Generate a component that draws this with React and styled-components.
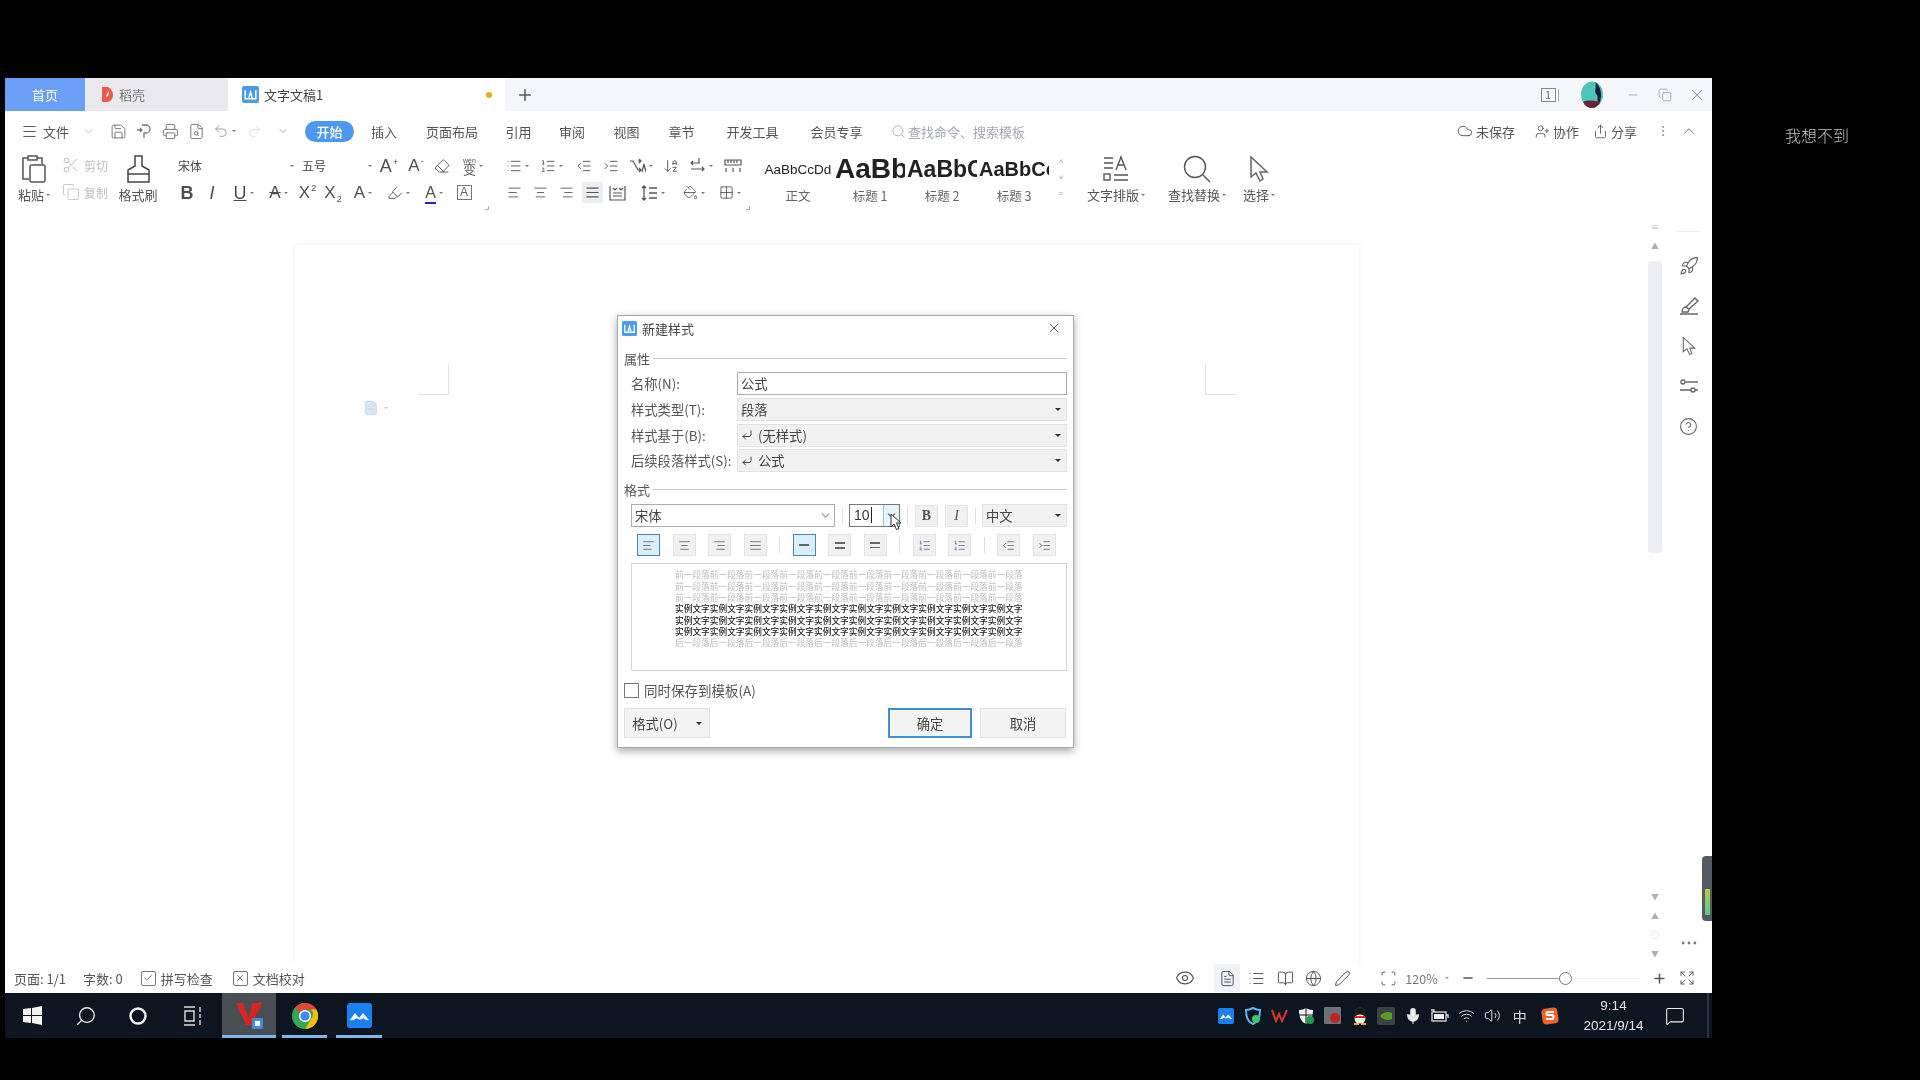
import React from "react";
import styled, { createGlobalStyle } from "styled-components";
import {
  Menu, ChevronDown, ChevronUp, Save, Printer, FileSearch, Undo2, Redo2, Plus, Minus, X, Copy,
  Scissors, List, ListOrdered, IndentDecrease, IndentIncrease, AlignLeft, AlignCenter,
  AlignRight, AlignJustify, Eraser, Highlighter, Search, Rocket, CircleHelp, Eye, FileText, BookOpen,
  Globe, Scan, Cloud, UserPlus, Share, EllipsisVertical, Ellipsis, Mic, Wifi, Volume2, MessageSquare,
  CornerDownLeft, Grid2x2, PaintBucket, ArrowDownAZ, Expand, Check, Pen,
} from "lucide-react";

const GlobalStyle = createGlobalStyle`
  html, body { margin: 0; padding: 0; background: #000; }
  body { font-family: "Noto Sans CJK SC", "Liberation Sans", sans-serif; color: #444; }
  * { box-sizing: border-box; }
`;

const Screen = styled.div`
  position: relative;
  width: 1920px;
  height: 1080px;
  background: #000;
  padding: 78px 0 0 5px;
  display: flex;
  overflow: hidden;
  filter: blur(0.35px);
`;

const Desktop = styled.div`
  width: 1707px;
  display: flex;
  flex-direction: column;
`;

const Caption = styled.div`
  margin: 45px 0 0 73px;
  font-size: 16px;
  color: #c4c4c4;
  font-weight: 300;
  white-space: nowrap;
`;

const Window = styled.div`
  position: relative;
  height: 915px;
  background: #fff;
  display: flex;
  flex-direction: column;
`;

/* tab strip */
const TabBar = styled.div`
  height: 33px;
  background: #f5f6fa;
  display: flex;
  align-items: center;
  flex: none;
`;

const Tab = styled.div`
  width: ${(p) => p.$w}px;
  height: 33px;
  display: flex;
  align-items: center;
  justify-content: ${(p) => (p.$center ? "center" : "flex-start")};
  gap: 5px;
  padding-left: ${(p) => p.$pad || 0}px;
  font-size: 13px;
  background: ${(p) => p.$bg};
  color: ${(p) => p.$color || "#555"};
`;

const Dot = styled.span`
  width: 6px;
  height: 6px;
  border-radius: 50%;
  background: #f2a71b;
  margin-left: auto;
  margin-right: 13px;
`;

const AddTab = styled.div`
  width: 40px;
  display: flex;
  justify-content: center;
  color: #555;
`;

const TabRight = styled.div`
  margin-left: auto;
  display: flex;
  align-items: center;
  height: 33px;
`;

const WinCell = styled.div`
  width: ${(p) => p.$w}px;
  display: flex;
  justify-content: center;
  align-items: center;
  color: ${(p) => p.$color || "#9a9a9a"};
`;

const NumBadge = styled.div`
  width: 15px;
  height: 14px;
  border: 1.5px solid #888;
  font-size: 10px;
  line-height: 11px;
  text-align: center;
  color: #666;
  box-shadow: 3px 0 0 -1px #fff, 4px 0 0 -1px #aaa;
`;

/* menu row */
const MenuRow = styled.div`
  height: 40px;
  display: flex;
  align-items: center;
  flex: none;
`;

const Cell = styled.div`
  flex: 0 0 ${(p) => p.$w}px;
  height: 100%;
  display: flex;
  align-items: center;
  justify-content: center;
  gap: 3px;
  font-size: ${(p) => p.$fs || 13}px;
  color: ${(p) => p.$color || "#555"};
  white-space: nowrap;
`;

const StartPill = styled.div`
  width: 49px;
  height: 21px;
  margin: 0 5px 0 8px;
  flex: none;
  border-radius: 11px;
  background: #4d98f0;
  color: #fff;
  font-size: 13px;
  font-weight: 500;
  line-height: 21px;
  text-align: center;
`;

const SearchHint = styled.div`
  display: flex;
  align-items: center;
  gap: 2px;
  font-size: 13px;
  color: #a4a8b2;
  margin-left: 11px;
  width: 140px;
  flex: none;
`;

const MenuRight = styled.div`
  margin-left: auto;
  display: flex;
  align-items: center;
  height: 100%;
  padding-right: 9px;
`;

const Action = styled.div`
  display: flex;
  align-items: center;
  gap: 3px;
  font-size: 13px;
  color: #555;
  margin-right: ${(p) => p.$mr || 0}px;
`;

/* ribbon */
const Ribbon = styled.div`
  height: 61px;
  display: flex;
  flex: none;
  padding-left: 7px;
`;

const BigTool = styled.div`
  flex: 0 0 ${(p) => p.$w}px;
  display: flex;
  flex-direction: column;
  align-items: center;
  font-size: 13px;
  color: #555;
  padding-top: 1px;
  white-space: nowrap;
`;

const BigIcon = styled.div`
  height: 33px;
  display: flex;
  align-items: center;
  justify-content: center;
`;

const BigLabel = styled.div`
  height: 20px;
  line-height: 20px;
  display: flex;
  align-items: center;
  gap: 2px;
`;

const SmallColumn = styled.div`
  flex: 0 0 58px;
  display: flex;
  flex-direction: column;
  padding-left: 6px;
`;

const SmallTool = styled.div`
  height: 27px;
  display: flex;
  align-items: center;
  gap: 4px;
  font-size: 12px;
  color: #bdbdbd;
  padding-top: 1px;
`;

const RibbonGroup = styled.div`
  position: relative;
  flex: 0 0 ${(p) => p.$w}px;
  padding-left: ${(p) => p.$pad || 0}px;
  padding-top: 1px;
  display: flex;
  flex-direction: column;
`;

const RibbonRow = styled.div`
  height: 27px;
  display: flex;
  align-items: center;
`;

const Launcher = styled.span`
  position: absolute;
  right: ${(p) => p.$r}px;
  bottom: 2px;
  width: 4px;
  height: 4px;
  border-right: 1px solid #aaa;
  border-bottom: 1px solid #aaa;
`;

const FontName = styled.div`
  flex: 0 0 ${(p) => p.$w}px;
  display: flex;
  align-items: center;
  justify-content: space-between;
  font-size: 12px;
  color: #444;
  padding-right: 3px;
  padding-left: ${(p) => p.$pad}px;
`;

const Caret = styled.span`
  flex: none;
  width: 0;
  height: 0;
  border-left: 2px solid transparent;
  border-right: 2px solid transparent;
  border-top: 2.5px solid ${(p) => p.$color || "#777"};
  margin-left: ${(p) => p.$ml || 0}px;
`;

const Letter = styled.span`
  font-family: "Liberation Sans", sans-serif;
  font-size: ${(p) => p.$fs || 17}px;
  font-weight: ${(p) => (p.$bold ? 700 : 400)};
  font-style: ${(p) => (p.$italic ? "italic" : "normal")};
  text-decoration: ${(p) => p.$deco || "none"};
  line-height: 1;
  color: #4e4e4e;
  position: relative;
`;

const Mark = styled.sup`
  font-size: 9px;
  line-height: 0;
  margin-left: 1px;
`;

const Sub = styled.sub`
  font-size: 9px;
  line-height: 0;
  margin-left: 1px;
`;

const ColorBar = styled.span`
  position: absolute;
  left: 0;
  right: 0;
  bottom: -3px;
  height: 2px;
  background: ${(p) => p.$color};
`;

const BoxedA = styled.span`
  width: 15px;
  height: 15px;
  border: 1px solid #777;
  font-family: "Liberation Sans", sans-serif;
  font-size: 12px;
  line-height: 13px;
  text-align: center;
  color: #666;
`;

const WenTool = styled.span`
  display: flex;
  flex-direction: column;
  align-items: center;
  line-height: 1;
`;

const WenTop = styled.span`
  font-size: 7px;
  font-family: "Liberation Sans", sans-serif;
  color: #555;
`;

const WenChar = styled.span`
  font-size: 13px;
  margin-top: -2px;
  color: #555;
`;

const Active = styled.span`
  display: flex;
  padding: 3px;
  background: #eceef1;
`;

const Gallery = styled.div`
  flex: 0 0 288px;
  display: flex;
`;

const StyleCard = styled.div`
  flex: 0 0 72px;
  display: flex;
  flex-direction: column;
  align-items: center;
  overflow: hidden;
`;

const StyleSample = styled.div`
  height: 36px;
  width: 70px;
  overflow: hidden;
  display: flex;
  align-items: center;
  justify-content: ${(p) => (p.$left ? "flex-start" : "center")};
  font-family: "Liberation Sans", sans-serif;
  font-size: ${(p) => p.$fs}px;
  font-weight: ${(p) => (p.$bold ? 700 : 400)};
  color: #222;
  white-space: nowrap;
`;

const StyleLabel = styled.div`
  font-size: 12.5px;
  color: #666;
  line-height: 20px;
  margin-top: -1px;
`;

const GalleryArrows = styled.div`
  flex: 0 0 22px;
  margin-right: 9px;
  display: flex;
  flex-direction: column;
  align-items: center;
  justify-content: space-around;
  height: 50px;
  padding-top: 2px;
  color: #999;
  font-size: 8px;
  line-height: 1;
`;

/* work area */
const Workspace = styled.div`
  flex: 1;
  display: flex;
  min-height: 0;
`;

const PageArea = styled.div`
  flex: 0 0 1640px;
  padding: 33px 0 0 290px;
  overflow: hidden;
`;

const Sheet = styled.div`
  width: 1064px;
  height: 800px;
  padding-top: 119px;
  background: #fff;
  box-shadow: 0 0 5px rgba(120, 120, 130, 0.13);
`;

const MarkRow = styled.div`
  display: flex;
  justify-content: space-between;
  padding: 0 123px;
`;

const CropMark = styled.div`
  width: 31px;
  height: 31px;
  border-bottom: 1px solid #e2e2e2;
  border-${(p) => (p.$right ? "left" : "right")}: 1px solid #e2e2e2;
`;

const FileHint = styled.div`
  display: flex;
  align-items: center;
  gap: 5px;
  margin: 5px 0 0 68px;
  color: #d3dcea;
`;

const ScrollColumn = styled.div`
  flex: 0 0 20px;
  display: flex;
  flex-direction: column;
  align-items: center;
  padding-top: 6px;
  color: #b5b5b5;
  font-size: 8px;
`;

const ScrollArrow = styled.div`
  height: ${(p) => p.$h || 19}px;
  line-height: 1;
  display: flex;
  justify-content: center;
  align-items: center;
  color: #b0b0b0;
`;

const Thumb = styled.div`
  width: 14px;
  height: 296px;
  margin-top: 5px;
  margin-bottom: 335px;
  border-radius: 3px;
  background: #eceef4;
`;

const SideColumn = styled.div`
  flex: 0 0 47px;
  display: flex;
  flex-direction: column;
  align-items: center;
  padding-top: 19px;
  position: relative;
  color: #666;
`;

const SideRule = styled.div`
  width: 24px;
  height: 1px;
  background: #ececec;
  margin-bottom: 14px;
`;

const SideIcon = styled.div`
  height: 40px;
  display: flex;
  align-items: center;
  justify-content: center;
`;

const SideMore = styled.div`
  margin-top: 487px;
  color: #777;
`;

const Meter = styled.div`
  position: absolute;
  right: 0;
  top: 644px;
  width: 10px;
  height: 65px;
  border-radius: 4px 0 0 4px;
  background: #555963;
  display: flex;
  align-items: flex-end;
  justify-content: center;
  padding-bottom: 6px;
`;

const MeterFill = styled.div`
  width: 5px;
  height: 26px;
  background: linear-gradient(#b9cb4c, #58c888);
`;

/* status */
const StatusBar = styled.div`
  height: 30px;
  flex: none;
  display: flex;
  align-items: center;
  padding-left: 9px;
  font-size: 13px;
  color: #555;
`;

const StatusText = styled.div`
  display: flex;
  align-items: center;
  gap: 5px;
  margin-right: ${(p) => p.$mr}px;
  white-space: nowrap;
`;

const CheckBox = styled.span`
  width: 15px;
  height: 15px;
  border: 1px solid #777;
  border-radius: 2px;
  display: flex;
  align-items: center;
  justify-content: center;
  font-size: 9px;
  line-height: 1;
  color: #555;
`;

const StatusRight = styled.div`
  margin-left: auto;
  display: flex;
  align-items: center;
  height: 100%;
  padding-right: 11px;
`;

const ViewActive = styled.div`
  width: 26px;
  height: 28px;
  background: #f1f2f5;
  display: flex;
  align-items: center;
  justify-content: center;
`;

const Slider = styled.div`
  flex: 0 0 153px;
  margin: 0 5px;
  height: 1px;
  position: relative;
  background: linear-gradient(to right, #999 51%, #eee 51%);
`;

const SliderKnob = styled.span`
  position: absolute;
  left: 72px;
  top: -6px;
  width: 13px;
  height: 13px;
  border-radius: 50%;
  border: 1.5px solid #777;
  background: #fff;
`;

/* taskbar */
const Taskbar = styled.div`
  height: 45px;
  flex: none;
  background: #0d1520;
  display: flex;
  align-items: center;
  color: #e6e6e6;
`;

const TaskItem = styled.div`
  flex: 0 0 ${(p) => p.$w}px;
  margin-right: ${(p) => p.$mr || 0}px;
  height: 100%;
  display: flex;
  align-items: center;
  justify-content: center;
  background: ${(p) => (p.$active ? "#494d54" : "transparent")};
  border-bottom: ${(p) => (p.$open ? "3px solid #7eb6e8" : "none")};
  padding-top: ${(p) => (p.$open ? "3px" : 0)};
`;

const TaskRight = styled.div`
  margin-left: auto;
  display: flex;
  align-items: center;
  height: 100%;
`;

const TrayIcon = styled.div`
  flex: 0 0 ${(p) => p.$w || 26.7}px;
  display: flex;
  justify-content: center;
  align-items: center;
  font-size: 14px;
  color: #ddd;
`;

const Clock = styled.div`
  flex: 0 0 93px;
  text-align: center;
  font-size: 13.5px;
  line-height: 20px;
  color: #e4e4e4;
  font-family: "Liberation Sans", sans-serif;
`;

const TaskEdge = styled.div`
  width: 2px;
  height: 100%;
  margin: 0 3px 0 17px;
  background: #2a3240;
`;

/* dialog */
const Dialog = styled.div`
  position: absolute;
  left: 612px;
  top: 237px;
  width: 457px;
  height: 433px;
  background: #fff;
  border: 1px solid #a9a9a9;
  box-shadow: 0 3px 8px rgba(0, 0, 0, 0.35);
  padding: 0 6px 0 6px;
`;

const DialogTitle = styled.div`
  height: 26px;
  margin-left: -2px;
  padding-bottom: 2px;
  display: flex;
  align-items: center;
  gap: 5px;
  font-size: 13px;
  color: #444;
`;

const CloseBtn = styled.div`
  margin-left: auto;
  margin-right: 5px;
  display: flex;
  color: #555;
`;

const SectionTitle = styled.div`
  height: 20px;
  margin-top: ${(p) => p.$mt}px;
  display: flex;
  align-items: center;
  gap: 3px;
  font-size: 13px;
  color: #555;

  &::after {
    content: "";
    flex: 1;
    height: 1px;
    background: #c9c9c9;
  }
`;

const FormRows = styled.div`
  display: flex;
  flex-direction: column;
  gap: 2.8px;
  padding-left: 7px;
  margin-top: 4px;
`;

const FormRow = styled.div`
  display: flex;
  align-items: center;
  height: 23px;
`;

const FormLabel = styled.div`
  flex: 0 0 106px;
  font-size: 13.3px;
  color: #555;
  white-space: nowrap;
`;

const Field = styled.div`
  flex: 1;
  width: ${(p) => (p.$w ? `${p.$w}px` : "auto")};
  flex-basis: ${(p) => (p.$w ? `${p.$w}px` : "0")};
  flex-grow: ${(p) => (p.$w ? 0 : 1)};
  height: 100%;
  display: flex;
  align-items: center;
  gap: 5px;
  padding: 0 5px 0 3px;
  font-size: 13.3px;
  color: #444;
  background: ${(p) => (p.$plain ? "#fff" : "#f1f1f1")};
  border: 1px solid ${(p) => (p.$plain ? "#a6adb5" : "#e1e1e1")};
`;

const FieldCaret = styled(Caret)`
  margin-left: ${(p) => (p.$inline ? 0 : "auto")};
  border-left-width: 3px;
  border-right-width: 3px;
  border-top-width: 3px;
`;

const FieldChevron = styled(ChevronDown)`
  margin-left: auto;
  margin-right: -3px;
  color: #999;
`;

const FormatRow = styled.div`
  display: flex;
  align-items: center;
  height: 23px;
  margin: 5px 0 0 7px;
`;

const SizeField = styled.div`
  flex: 0 0 51px;
  height: 100%;
  display: flex;
  border: 1px solid #777;
  font-size: 14px;
`;

const SizeValue = styled.div`
  flex: 1;
  padding-left: 4px;
  line-height: 21px;
  font-family: "Liberation Sans", sans-serif;
  color: #333;
`;

const SizeCaret = styled.span`
  border-right: 1px solid #222;
  padding-right: 1px;
`;

const SizeDrop = styled.div`
  flex: 0 0 16px;
  background: #e6f5fb;
  border-left: 1px solid #8dc6dc;
  display: flex;
  align-items: center;
  justify-content: center;
  color: #555;
`;

const Separator = styled.div`
  flex: 0 0 ${(p) => p.$w}px;
  display: flex;
  justify-content: center;

  &::after {
    content: "";
    width: 1px;
    height: 16px;
    background: #ddd;
  }
`;

const SquareBtn = styled.div`
  flex: 0 0 ${(p) => p.$w || 23}px;
  height: ${(p) => p.$h || 22}px;
  margin-left: ${(p) => p.$ml || 0}px;
  display: flex;
  align-items: center;
  justify-content: center;
  font-family: "Liberation Serif", serif;
  font-size: 14px;
  font-weight: ${(p) => (p.$bold ? 700 : 400)};
  font-style: ${(p) => (p.$italic ? "italic" : "normal")};
  color: #555;
  background: ${(p) => (p.$on ? "#d9f0fb" : "#f1f1f1")};
  border: 1px solid ${(p) => (p.$on ? "#4b87a5" : "#e3e3e3")};
`;

const AlignRow = styled.div`
  display: flex;
  align-items: center;
  gap: 12.5px;
  margin: 7px 0 0 13px;
`;

const RowSep = styled.div`
  width: 1px;
  height: 16px;
  background: #ddd;
  flex: none;
`;

const Line = styled.span`
  display: block;
  width: 10px;
  height: ${(p) => (p.$thick ? 2 : 1.5)}px;
  background: #666;
  margin: 1.5px 0;
`;

const LineStack = styled.div`
  display: flex;
  flex-direction: column;
  align-items: center;
  justify-content: center;
  height: 12px;
`;

const Preview = styled.div`
  margin: 7px 0 0 7px;
  height: 108px;
  border: 1px solid #d4d4d4;
  padding: 5px 0 0 43px;
  overflow: hidden;
`;

const PreviewLine = styled.div`
  font-size: 8.7px;
  line-height: 11.3px;
  height: 11.3px;
  white-space: nowrap;
  color: ${(p) => (p.$dark ? "#222" : "#bbb")};
  font-weight: ${(p) => (p.$dark ? 500 : 400)};
`;

const CheckRow = styled.div`
  height: 20px;
  margin-top: 9px;
  display: flex;
  align-items: center;
  gap: 5px;
  font-size: 13.5px;
  color: #555;
`;

const EmptyCheck = styled.span`
  width: 15px;
  height: 15px;
  border: 1px solid #777;
  background: #fff;
`;

const ButtonRow = styled.div`
  display: flex;
  gap: 8px;
  margin: 8px 1px 0 0;
`;

const DialogButton = styled.div`
  flex: 0 0 ${(p) => p.$w}px;
  height: 30px;
  margin-left: ${(p) => (p.$push ? "auto" : 0)};
  display: flex;
  align-items: center;
  justify-content: center;
  gap: 18px;
  font-size: 13.3px;
  color: #444;
  background: #f3f3f3;
  border: ${(p) => (p.$primary ? "2px solid #3f8fd2" : "1px solid #e0e0e0")};
`;

const Pointer = styled.svg`
  position: absolute;
  left: 272px;
  top: 197px;
`;

const ic = { strokeWidth: 1.4 };

const WpsLogo = ({ size = 15 }) => (
  <svg width={size} height={size} viewBox="0 0 16 16">
    <rect width="16" height="16" rx="2" fill="#4a9bea" />
    <path d="M3 4v8h10V4M6.5 11l1.5-5 1.5 5" fill="none" stroke="#fff" strokeWidth="1.4" />
  </svg>
);

const ShellLogo = () => (
  <svg width="13" height="17" viewBox="0 0 13 17">
    <path d="M1 1h6c4 2 5 6 5 8 0 4-3 7-6 7H1z" fill="#ee5a46" />
    <path d="M7 4c1 3-2 4-2 7 2 0 4-3 2-7z" fill="#fff" />
  </svg>
);

const Avatar = () => (
  <svg width="24" height="27" viewBox="0 0 24 27">
    <ellipse cx="12" cy="13.5" rx="11" ry="13" fill="#4fc4b8" />
    <path d="M15 1c6 4 8 14 4 22-3-4 0-8-3-10-2-3 1-8-1-12z" fill="#13243a" />
    <path d="M3 21c5-2 13-2 17 1-2 3-5 5-8 5-4 0-7-2-9-6z" fill="#6b2138" />
  </svg>
);

const SaveAs = () => (
  <svg width="17" height="17" viewBox="0 0 17 17" fill="none" stroke="#777" strokeWidth="1.3">
    <path d="M6 2h4a4 4 0 0 1 0 8H8v5M1 7h5M4 5l2 2-2 2" />
  </svg>
);

const Paste = () => (
  <svg width="28" height="30" viewBox="0 0 28 30" fill="none" stroke="#555" strokeWidth="1.5">
    <path d="M8 4H3v21h6" />
    <path d="M17 4h5v6" />
    <rect x="8" y="2" width="9" height="4" />
    <rect x="10" y="11" width="15" height="17" rx="1.5" />
  </svg>
);

const Brush = () => (
  <svg width="25" height="30" viewBox="0 0 25 30" fill="none" stroke="#444" strokeWidth="1.5">
    <path d="M9 2h7v10l7 4v12H2V16l7-4z" />
    <path d="M2 20h21" />
  </svg>
);

const Ruler = () => (
  <svg width="18" height="14" viewBox="0 0 18 14" fill="none" stroke="#555" strokeWidth="1.2">
    <path d="M1 1h16v5H1zM4 1v3M7 1v3M10 1v3M13 1v3M2 9v4M9 9v4M16 9v4" />
  </svg>
);

const ReturnArrows = () => (
  <svg width="17" height="17" viewBox="0 0 17 17" fill="none" stroke="#555" strokeWidth="1.2">
    <path d="M10 1v5H2M4 4L2 6l2 2M2 12h13M13 10l2 2-2 2" />
  </svg>
);

const Distribute = () => (
  <svg width="17" height="16" viewBox="0 0 17 16" fill="none" stroke="#555" strokeWidth="1.2">
    <path d="M1 1v14h15V1M4 3l2 2 2-2M10 3l2 2 2-2M4 8h9M4 11h9" />
  </svg>
);

const LineSpacing = () => (
  <svg width="17" height="16" viewBox="0 0 17 16" fill="none" stroke="#555" strokeWidth="1.3">
    <path d="M3 1v14M1 3l2-2 2 2M1 13l2 2 2-2M8 3h8M8 8h8M8 13h8" />
  </svg>
);

const CrossArrows = () => (
  <svg width="17" height="16" viewBox="0 0 17 16" fill="none" stroke="#555" strokeWidth="1.2">
    <path d="M1 3h3l5 9h3M9 3h3M10 1l2 2-2 2M10 10l2 2-2 2M13 14l2-8 2 8" />
  </svg>
);

const TypeSet = () => (
  <svg width="28" height="28" viewBox="0 0 28 28" fill="none" stroke="#555" strokeWidth="1.4">
    <path d="M2 3h9M2 8h9M2 13h9M14 15l5-13 5 13M16 10h6" />
    <rect x="2" y="19" width="6" height="6" />
    <path d="M12 20h14M12 25h14" />
  </svg>
);

const MagnifyBig = () => (
  <svg width="30" height="30" viewBox="0 0 30 30" fill="none" stroke="#555" strokeWidth="1.4">
    <circle cx="13" cy="13" r="10.5" />
    <path d="M21 21l7 7" />
  </svg>
);

const Arrow = ({ w = 22, h = 28 }) => (
  <svg width={w} height={h} viewBox="0 0 22 28" fill="none" stroke="#666" strokeWidth="1.5">
    <path d="M3 2v20l5-4 4 8 3-2-3-7h7z" />
  </svg>
);

const SideBrush = () => (
  <svg width="20" height="20" viewBox="0 0 20 20" fill="none" stroke="#666" strokeWidth="1.4">
    <path d="M7 11l9-9 3 3-9 8zM7 11c-3 0-4 3-4 5h6c1-1 1-2 1-3M1 18h18" />
  </svg>
);

const SideTune = () => (
  <svg width="20" height="16" viewBox="0 0 20 16" fill="none" stroke="#666" strokeWidth="1.4">
    <circle cx="4" cy="4" r="2" />
    <path d="M7 4h12M1 12h11M16 12h3" />
    <circle cx="14" cy="12" r="2" />
  </svg>
);

const WindowsLogo = () => (
  <svg width="19" height="19" viewBox="0 0 19 19" fill="#f4f4f4">
    <path d="M0 3l8-1v7H0zM9 2l10-2v9H9zM0 10h8v7l-8-1zM9 10h10v9L9 17z" />
  </svg>
);

const TaskView = () => (
  <svg width="20" height="20" viewBox="0 0 20 20" fill="none" stroke="#ddd" strokeWidth="1.4">
    <path d="M1 1h11M1 19h11M2 5h9v10H2zM17 1v5M17 8v4M17 14v5" />
  </svg>
);

const RedW = () => (
  <svg width="29" height="29" viewBox="0 0 29 29">
    <path d="M1 2h7l6 15 3-15h8l-7 22h-7z" fill="#d8261f" />
    <path d="M24 1l3 0-4 12z" fill="#d8261f" />
    <rect x="17" y="17" width="11" height="11" rx="1" fill="#3f8de0" />
    <rect x="20" y="20" width="5" height="5" fill="#fff" />
  </svg>
);

const ChromeIcon = () => (
  <svg width="26" height="26" viewBox="0 0 26 26">
    <circle cx="13" cy="13" r="13" fill="#35a853" />
    <path d="M13 0a13 13 0 0 1 11.3 6.5H13A6.5 6.5 0 0 0 7 10L3.5 4.5A13 13 0 0 1 13 0z" fill="#ea4335" />
    <path d="M24.3 6.5A13 13 0 0 1 13 26l6-10a6.5 6.5 0 0 0 0-9.5z" fill="#fbbc05" />
    <circle cx="13" cy="13" r="6" fill="#fff" />
    <circle cx="13" cy="13" r="4.6" fill="#4285f4" />
  </svg>
);

const PeakIcon = ({ size = 25 }) => (
  <svg width={size} height={size} viewBox="0 0 25 25">
    <rect width="25" height="25" rx="3" fill="#1a7ff0" />
    <path d="M3 17l5-7 4 5 4-5 6 7c-3 1-4-1-6-2-2 2-4 2-6 0-2 1-4 3-7 2z" fill="#fff" />
  </svg>
);

const ShieldBlue = () => (
  <svg width="18" height="18" viewBox="0 0 18 18">
    <path d="M2 3c3 0 5-1 7-2 2 1 4 2 7 2 0 7-2 12-7 14C4 15 2 10 2 3z" fill="none" stroke="#5db8ef" strokeWidth="2" />
    <circle cx="12" cy="12" r="4" fill="#42c46d" />
  </svg>
);

const ShieldWhite = () => (
  <svg width="18" height="18" viewBox="0 0 18 18">
    <path d="M2 3c3 0 5-1 7-2 2 1 4 2 7 2 0 7-2 12-7 14C4 15 2 10 2 3z" fill="#f2f2f2" />
    <path d="M9 1v16M2 8h14" stroke="#0d1520" strokeWidth="1" />
    <circle cx="13" cy="13" r="4" fill="#1d9a4f" />
  </svg>
);

const TrayW = () => (
  <svg width="17" height="14" viewBox="0 0 17 14" fill="none" stroke="#c6362b" strokeWidth="2.2">
    <path d="M1 1l4 11 3-7 3 7 5-11" />
  </svg>
);

const RedSeal = () => (
  <svg width="17" height="17" viewBox="0 0 17 17">
    <rect width="17" height="17" rx="1" fill="#6d7076" />
    <circle cx="11" cy="11" r="5" fill="#c4201f" />
  </svg>
);

const Penguin = () => (
  <svg width="14" height="18" viewBox="0 0 14 18">
    <ellipse cx="7" cy="6" rx="4.5" ry="5.5" fill="#171717" stroke="#444" strokeWidth="0.5" />
    <ellipse cx="7" cy="12" rx="5.5" ry="4.5" fill="#f4f4f4" />
    <path d="M2 9h10v2H2z" fill="#d92a24" />
    <path d="M1 16h5v2H1zM8 16h5v2H8z" fill="#e9b11d" />
  </svg>
);

const GpuIcon = () => (
  <svg width="18" height="18" viewBox="0 0 18 18">
    <rect width="18" height="18" rx="2" fill="#3c4146" />
    <path d="M3 9c3-4 8-5 12-3v6c-4 2-9 1-12-3z" fill="#5d9b25" />
  </svg>
);

const BatteryPlug = () => (
  <svg width="19" height="13" viewBox="0 0 19 13" fill="none" stroke="#ddd" strokeWidth="1.3">
    <rect x="2" y="3" width="14" height="9" />
    <rect x="4" y="5" width="10" height="5" fill="#eee" stroke="none" />
    <path d="M1 1h3v2M16 6h2v3" />
  </svg>
);

const Sogou = () => (
  <svg width="18" height="18" viewBox="0 0 18 18">
    <rect x="1" y="1" width="16" height="16" rx="4" fill="#f0622a" transform="rotate(-8 9 9)" />
    <path d="M13 5H7c-2 0-2 3 0 3h4c2 0 2 4 0 4H5" fill="none" stroke="#fff" strokeWidth="2" />
  </svg>
);

const CursorGlyph = () => (
  <Pointer width="14" height="18" viewBox="0 0 14 18">
    <path d="M1 1v13l3-3 2.5 5.5 2.5-1L6.5 10H11z" fill="#fff" stroke="#333" strokeWidth="1" />
  </Pointer>
);

const BEFORE = "前一段落".repeat(10);
const SAMPLE = "实例文字".repeat(10);
const AFTER = "后一段落".repeat(10);

export default function App() {
  return (
    <>
      <GlobalStyle />
      <Screen>
        <Desktop>
          <Window>
            <TabBar>
              <Tab $w={80} $center $bg="#6b9ff6" $color="#fff">首页</Tab>
              <Tab $w={143} $pad={16} $bg="#e9e9ee" $color="#777"><ShellLogo />稻壳</Tab>
              <Tab $w={277} $pad={14} $bg="#fff" $color="#444"><WpsLogo size={17} />文字文稿1<Dot /></Tab>
              <AddTab><Plus size={18} strokeWidth={2} /></AddTab>
              <TabRight>
                <WinCell $w={36}><NumBadge>1</NumBadge></WinCell>
                <WinCell $w={52}><Avatar /></WinCell>
                <WinCell $w={30}><Minus size={14} {...ic} /></WinCell>
                <WinCell $w={34}><Copy size={14} {...ic} /></WinCell>
                <WinCell $w={30}><X size={18} {...ic} /></WinCell>
              </TabRight>
            </TabBar>

            <MenuRow>
              <Cell $w={13} />
              <Cell $w={22}><Menu size={17} {...ic} /></Cell>
              <Cell $w={32}>文件</Cell>
              <Cell $w={33}><ChevronDown size={13} color="#aaa" {...ic} /></Cell>
              <Cell $w={26}><Save size={17} color="#777" {...ic} /></Cell>
              <Cell $w={26}><SaveAs /></Cell>
              <Cell $w={26}><Printer size={17} color="#777" {...ic} /></Cell>
              <Cell $w={26}><FileSearch size={17} color="#777" {...ic} /></Cell>
              <Cell $w={30}><Undo2 size={16} color="#999" {...ic} /><Caret /></Cell>
              <Cell $w={30}><Redo2 size={15} color="#ddd" {...ic} /></Cell>
              <Cell $w={28}><ChevronDown size={12} color="#888" {...ic} /></Cell>
              <StartPill>开始</StartPill>
              <Cell $w={50}>插入</Cell>
              <Cell $w={86}>页面布局</Cell>
              <Cell $w={47}>引用</Cell>
              <Cell $w={60}>审阅</Cell>
              <Cell $w={49}>视图</Cell>
              <Cell $w={61}>章节</Cell>
              <Cell $w={81}>开发工具</Cell>
              <Cell $w={87}>会员专享</Cell>
              <SearchHint><Search size={15} color="#aaa" {...ic} />查找命令、搜索模板</SearchHint>
              <MenuRight>
                <Action $mr={20}><Cloud size={16} {...ic} />未保存</Action>
                <Action $mr={14}><UserPlus size={15} {...ic} />协作</Action>
                <Action $mr={14}><Share size={15} {...ic} />分享</Action>
                <Cell $w={24}><EllipsisVertical size={14} color="#888" {...ic} /></Cell>
                <Cell $w={28}><ChevronUp size={18} color="#888" {...ic} /></Cell>
              </MenuRight>
            </MenuRow>

            <Ribbon>
              <BigTool $w={44}>
                <BigIcon><Paste /></BigIcon>
                <BigLabel>粘贴<Caret /></BigLabel>
              </BigTool>
              <SmallColumn>
                <SmallTool><Scissors size={18} color="#c9c9c9" {...ic} />剪切</SmallTool>
                <SmallTool><Copy size={18} color="#c9c9c9" {...ic} />复制</SmallTool>
              </SmallColumn>
              <BigTool $w={48}>
                <BigIcon><Brush /></BigIcon>
                <BigLabel>格式刷</BigLabel>
              </BigTool>

              <RibbonGroup $w={339} $pad={13}>
                <RibbonRow>
                  <FontName $w={122} $pad={3}>宋体<Caret /></FontName>
                  <FontName $w={78} $pad={5}>五号<Caret /></FontName>
                  <Cell $w={28}><Letter $fs={18}>A<Mark>+</Mark></Letter></Cell>
                  <Cell $w={26}><Letter $fs={17}>A<Mark>-</Mark></Letter></Cell>
                  <Cell $w={26}><Eraser size={16} {...ic} /></Cell>
                  <Cell $w={36}><WenTool><WenTop>wén</WenTop><WenChar>变</WenChar></WenTool><Caret /></Cell>
                </RibbonRow>
                <RibbonRow>
                  <Cell $w={24}><Letter $fs={18} $bold>B</Letter></Cell>
                  <Cell $w={26}><Letter $fs={18} $italic>I</Letter></Cell>
                  <Cell $w={37}><Letter $fs={18} $deco="underline">U</Letter><Caret /></Cell>
                  <Cell $w={33}><Letter $fs={17} $deco="line-through">A</Letter><Caret /></Cell>
                  <Cell $w={25}><Letter>X<Mark>2</Mark></Letter></Cell>
                  <Cell $w={26}><Letter>X<Sub>2</Sub></Letter></Cell>
                  <Cell $w={34}><Letter $fs={17}>A</Letter><Caret /></Cell>
                  <Cell $w={36}><Highlighter size={16} {...ic} /><Caret /></Cell>
                  <Cell $w={36}><Letter $fs={16}>A<ColorBar $color="#2222bb" /></Letter><Caret /></Cell>
                  <Cell $w={24}><BoxedA>A</BoxedA></Cell>
                </RibbonRow>
                <Launcher $r={12} />
              </RibbonGroup>

              <RibbonGroup $w={261}>
                <RibbonRow>
                  <Cell $w={33}><List size={16} {...ic} /><Caret /></Cell>
                  <Cell $w={35}><ListOrdered size={16} {...ic} /><Caret /></Cell>
                  <Cell $w={29}><IndentDecrease size={16} {...ic} /></Cell>
                  <Cell $w={26}><IndentIncrease size={16} {...ic} /></Cell>
                  <Cell $w={34}><CrossArrows /><Caret /></Cell>
                  <Cell $w={26}><ArrowDownAZ size={16} {...ic} /></Cell>
                  <Cell $w={34}><ReturnArrows /><Caret /></Cell>
                  <Cell $w={29}><Ruler /></Cell>
                </RibbonRow>
                <RibbonRow>
                  <Cell $w={26}><AlignLeft size={15} {...ic} /></Cell>
                  <Cell $w={26}><AlignCenter size={15} {...ic} /></Cell>
                  <Cell $w={26}><AlignRight size={15} {...ic} /></Cell>
                  <Cell $w={26}><Active><AlignJustify size={15} strokeWidth={1.8} /></Active></Cell>
                  <Cell $w={25}><Distribute /></Cell>
                  <Cell $w={46}><LineSpacing /><Caret /></Cell>
                  <Cell $w={36}><PaintBucket size={15} {...ic} /><Caret /></Cell>
                  <Cell $w={36}><Grid2x2 size={15} {...ic} /><Caret /></Cell>
                </RibbonRow>
                <Launcher $r={12} />
              </RibbonGroup>

              <Gallery>
                <StyleCard>
                  <StyleSample $fs={13.5}>AaBbCcDd</StyleSample>
                  <StyleLabel>正文</StyleLabel>
                </StyleCard>
                <StyleCard>
                  <StyleSample $fs={28} $bold $left>AaBb</StyleSample>
                  <StyleLabel>标题 1</StyleLabel>
                </StyleCard>
                <StyleCard>
                  <StyleSample $fs={23} $bold $left>AaBbC</StyleSample>
                  <StyleLabel>标题 2</StyleLabel>
                </StyleCard>
                <StyleCard>
                  <StyleSample $fs={20} $bold $left>AaBbCc</StyleSample>
                  <StyleLabel>标题 3</StyleLabel>
                </StyleCard>
              </Gallery>
              <GalleryArrows><span>˄</span><span>˅</span><span>=</span></GalleryArrows>

              <BigTool $w={70}>
                <BigIcon><TypeSet /></BigIcon>
                <BigLabel>文字排版<Caret /></BigLabel>
              </BigTool>
              <BigTool $w={92}>
                <BigIcon><MagnifyBig /></BigIcon>
                <BigLabel>查找替换<Caret /></BigLabel>
              </BigTool>
              <BigTool $w={26}>
                <BigIcon><Arrow /></BigIcon>
                <BigLabel>选择<Caret /></BigLabel>
              </BigTool>
            </Ribbon>

            <Workspace>
              <PageArea>
                <Sheet>
                  <MarkRow>
                    <CropMark />
                    <CropMark $right />
                  </MarkRow>
                  <FileHint><FileText size={16} fill="#dbe5f3" /><Caret $color="#ccc" /></FileHint>
                </Sheet>
              </PageArea>
              <ScrollColumn>
                <ScrollArrow>≡</ScrollArrow>
                <ScrollArrow>▲</ScrollArrow>
                <Thumb />
                <ScrollArrow>▼</ScrollArrow>
                <ScrollArrow>▲</ScrollArrow>
                <ScrollArrow>○</ScrollArrow>
                <ScrollArrow>▼</ScrollArrow>
              </ScrollColumn>
              <SideColumn>
                <SideRule />
                <SideIcon><Rocket size={20} color="#666" {...ic} /></SideIcon>
                <SideIcon><SideBrush /></SideIcon>
                <SideIcon><Arrow w={16} h={20} /></SideIcon>
                <SideIcon><SideTune /></SideIcon>
                <SideIcon><CircleHelp size={19} {...ic} /></SideIcon>
                <SideMore><Ellipsis size={20} {...ic} /></SideMore>
                <Meter><MeterFill /></Meter>
              </SideColumn>
            </Workspace>

            <StatusBar>
              <StatusText $mr={17}>页面: 1/1</StatusText>
              <StatusText $mr={18}>字数: 0</StatusText>
              <StatusText $mr={20}><CheckBox><Check size={10} /></CheckBox>拼写检查</StatusText>
              <StatusText $mr={0}><CheckBox><X size={10} /></CheckBox>文档校对</StatusText>
              <StatusRight>
                <Cell $w={46}><Eye size={20} {...ic} /></Cell>
                <Cell $w={5} />
                <Cell $w={28}><ViewActive><FileText size={17} {...ic} /></ViewActive></Cell>
                <Cell $w={30}><List size={17} {...ic} /></Cell>
                <Cell $w={28}><BookOpen size={17} {...ic} /></Cell>
                <Cell $w={28}><Globe size={17} {...ic} /></Cell>
                <Cell $w={30}><Pen size={17} {...ic} /></Cell>
                <Cell $w={15} />
                <Cell $w={32}><Scan size={17} {...ic} /></Cell>
                <Cell $w={35} $fs={12.5} $color="#777">120%</Cell>
                <Cell $w={15}><Caret $color="#999" /></Cell>
                <Cell $w={28}><Minus size={14} strokeWidth={2.4} /></Cell>
                <Slider><SliderKnob /></Slider>
                <Cell $w={28}><Plus size={15} strokeWidth={2.4} /></Cell>
                <Cell $w={28}><Expand size={16} {...ic} /></Cell>
              </StatusRight>
            </StatusBar>

            <Dialog>
              <DialogTitle>
                <WpsLogo />
                新建样式
                <CloseBtn><X size={16} {...ic} /></CloseBtn>
              </DialogTitle>
              <SectionTitle $mt={6}>属性</SectionTitle>
              <FormRows>
                <FormRow>
                  <FormLabel>名称(N):</FormLabel>
                  <Field $plain>公式</Field>
                </FormRow>
                <FormRow>
                  <FormLabel>样式类型(T):</FormLabel>
                  <Field>段落<FieldCaret $color="#333" /></Field>
                </FormRow>
                <FormRow>
                  <FormLabel>样式基于(B):</FormLabel>
                  <Field><CornerDownLeft size={12} />(无样式)<FieldCaret $color="#333" /></Field>
                </FormRow>
                <FormRow>
                  <FormLabel>后续段落样式(S):</FormLabel>
                  <Field><CornerDownLeft size={12} />公式<FieldCaret $color="#333" /></Field>
                </FormRow>
              </FormRows>
              <SectionTitle $mt={7}>格式</SectionTitle>
              <FormatRow>
                <Field $plain $w={204}>宋体<FieldChevron size={13} /></Field>
                <Separator $w={14} />
                <SizeField>
                  <SizeValue><SizeCaret>10</SizeCaret></SizeValue>
                  <SizeDrop><ChevronDown size={13} /></SizeDrop>
                </SizeField>
                <Separator $w={15} />
                <SquareBtn $bold>B</SquareBtn>
                <SquareBtn $italic $ml={7}>I</SquareBtn>
                <Separator $w={14} />
                <Field $w={85}>中文<FieldCaret $color="#333" /></Field>
              </FormatRow>
              <AlignRow>
                <SquareBtn $on><AlignLeft size={13} {...ic} /></SquareBtn>
                <SquareBtn><AlignCenter size={13} {...ic} /></SquareBtn>
                <SquareBtn><AlignRight size={13} {...ic} /></SquareBtn>
                <SquareBtn><AlignJustify size={13} {...ic} /></SquareBtn>
                <RowSep />
                <SquareBtn $on><LineStack><Line $thick /></LineStack></SquareBtn>
                <SquareBtn><LineStack><Line $thick /><Line $thick /></LineStack></SquareBtn>
                <SquareBtn><LineStack><Line /><Line /></LineStack></SquareBtn>
                <RowSep />
                <SquareBtn><ListOrdered size={13} color="#5a5aa8" {...ic} /></SquareBtn>
                <SquareBtn><ListOrdered size={13} color="#5a5aa8" {...ic} /></SquareBtn>
                <RowSep />
                <SquareBtn><IndentDecrease size={13} {...ic} /></SquareBtn>
                <SquareBtn><IndentIncrease size={13} {...ic} /></SquareBtn>
              </AlignRow>
              <Preview>
                <PreviewLine>{BEFORE}</PreviewLine>
                <PreviewLine>{BEFORE}</PreviewLine>
                <PreviewLine>{BEFORE}</PreviewLine>
                <PreviewLine $dark>{SAMPLE}</PreviewLine>
                <PreviewLine $dark>{SAMPLE}</PreviewLine>
                <PreviewLine $dark>{SAMPLE}</PreviewLine>
                <PreviewLine>{AFTER}</PreviewLine>
              </Preview>
              <CheckRow><EmptyCheck />同时保存到模板(A)</CheckRow>
              <ButtonRow>
                <DialogButton $w={86}>格式(O)<FieldCaret $inline $color="#333" /></DialogButton>
                <DialogButton $w={84} $push $primary>确定</DialogButton>
                <DialogButton $w={86}>取消</DialogButton>
              </ButtonRow>
              <CursorGlyph />
            </Dialog>
          </Window>

          <Taskbar>
            <TaskItem $w={54}><WindowsLogo /></TaskItem>
            <TaskItem $w={54}><Search size={22} strokeWidth={1.5} style={{ transform: "scaleX(-1)" }} /></TaskItem>
            <TaskItem $w={50}><svg width="18" height="18" viewBox="0 0 18 18"><circle cx="9" cy="9" r="7.5" fill="none" stroke="#f2f2f2" strokeWidth="2.4" /></svg></TaskItem>
            <TaskItem $w={59}><TaskView /></TaskItem>
            <TaskItem $w={54} $mr={6} $active $open><RedW /></TaskItem>
            <TaskItem $w={45} $mr={9} $open><ChromeIcon /></TaskItem>
            <TaskItem $w={46} $open><PeakIcon /></TaskItem>
            <TaskRight>
              <TrayIcon><PeakIcon size={16} /></TrayIcon>
              <TrayIcon><ShieldBlue /></TrayIcon>
              <TrayIcon><TrayW /></TrayIcon>
              <TrayIcon><ShieldWhite /></TrayIcon>
              <TrayIcon><RedSeal /></TrayIcon>
              <TrayIcon><Penguin /></TrayIcon>
              <TrayIcon><GpuIcon /></TrayIcon>
              <TrayIcon><Mic size={18} fill="#eee" strokeWidth={1.5} /></TrayIcon>
              <TrayIcon><BatteryPlug /></TrayIcon>
              <TrayIcon><Wifi size={17} strokeWidth={1.4} /></TrayIcon>
              <TrayIcon><Volume2 size={17} strokeWidth={1.4} /></TrayIcon>
              <TrayIcon>中</TrayIcon>
              <TrayIcon $w={34}><Sogou /></TrayIcon>
              <Clock>9:14<br />2021/9/14</Clock>
              <WinCell $w={30} $color="#eee"><MessageSquare size={20} strokeWidth={1.3} /></WinCell>
              <TaskEdge />
            </TaskRight>
          </Taskbar>
        </Desktop>
        <Caption>我想不到</Caption>
      </Screen>
    </>
  );
}
